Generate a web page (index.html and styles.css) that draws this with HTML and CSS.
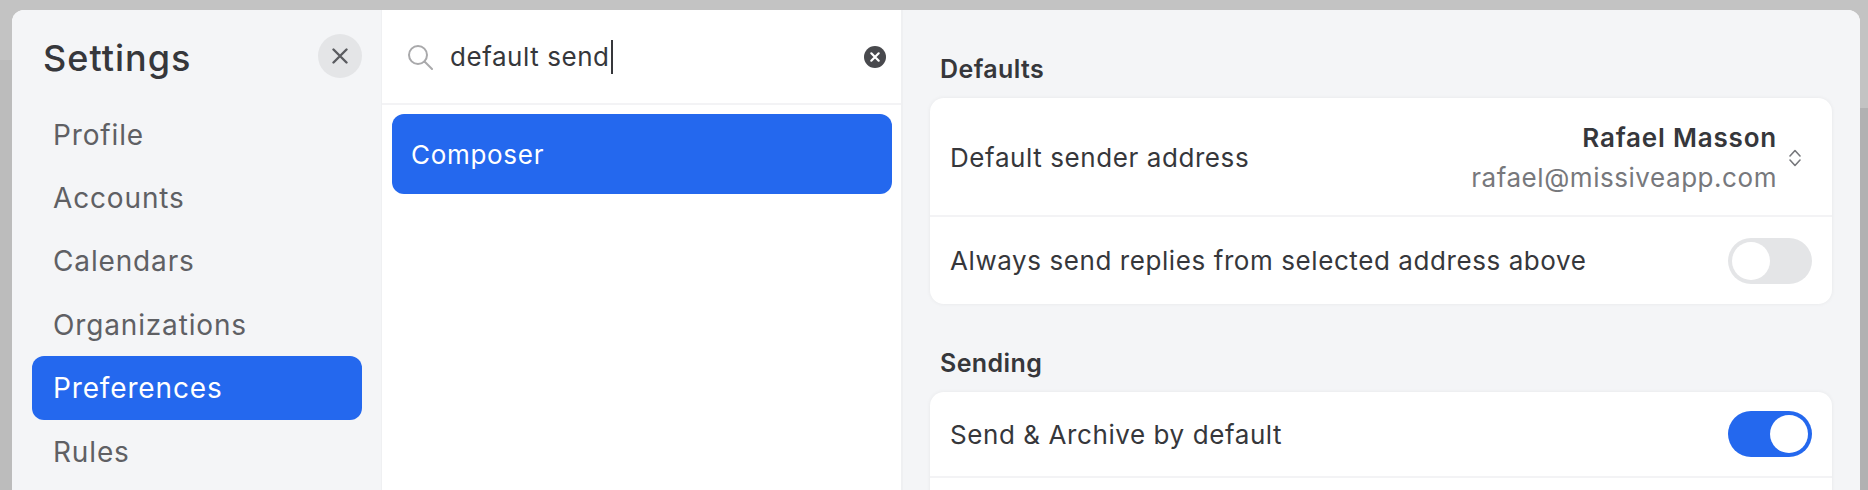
FILE: index.html
```html
<!DOCTYPE html>
<html lang="en">
<head>
<meta charset="utf-8">
<title>Settings</title>
<link rel="stylesheet" href="styles.css">
</head>
<body>
<div class="modal">
  <aside class="sidebar">
    <header class="side-head">
      <h1 class="title">Settings</h1>
      <button class="close" aria-label="Close">
        <svg width="16" height="16" viewBox="0 0 16 16"><path d="M1.5 1.5 14.500 14.500M14.500 1.500 1.500 14.500" fill="none" stroke="#5b5c60" stroke-width="2.4" stroke-linecap="round"/></svg>
      </button>
    </header>
    <nav class="nav">
      <a class="nav-item">Profile</a>
      <a class="nav-item">Accounts</a>
      <a class="nav-item">Calendars</a>
      <a class="nav-item">Organizations</a>
      <a class="nav-item active">Preferences</a>
      <a class="nav-item">Rules</a>
    </nav>
  </aside>
  <section class="middle">
    <div class="search">
      <svg class="search-icon" width="26" height="26" viewBox="0 0 26 26"><circle cx="11" cy="11" r="9" fill="none" stroke="#a9a9ab" stroke-width="2"/><path d="M17.5 17.5 25 25" fill="none" stroke="#a9a9ab" stroke-width="2" stroke-linecap="round"/></svg>
      <span class="query">default send</span><span class="caret"></span>
      <svg class="clear" width="22" height="22" viewBox="0 0 22 22"><circle cx="11" cy="11" r="11" fill="#48494d"/><path d="M7.3 7.3 14.7 14.7M14.7 7.3 7.3 14.7" fill="none" stroke="#fff" stroke-width="2.2" stroke-linecap="round"/></svg>
    </div>
    <div class="results">
      <a class="result">Composer</a>
    </div>
  </section>
  <main class="content">
    <h2 class="section-title">Defaults</h2>
    <div class="card">
      <div class="row row-tall">
        <span>Default sender address</span>
        <div class="picker">
          <div class="identity">
            <strong class="name">Rafael Masson</strong>
            <span class="email">rafael@missiveapp.com</span>
          </div>
          <svg class="updown" width="12" height="18" viewBox="0 0 12 18"><path d="M1 7 6 1.5 11 7M1 11 6 16.5 11 11" fill="none" stroke="#77787c" stroke-width="1.6" stroke-linecap="round" stroke-linejoin="round"/></svg>
        </div>
      </div>
      <div class="row row-plain">
        <span>Always send replies from selected address above</span>
        <span class="toggle"><span class="knob"></span></span>
      </div>
    </div>
    <h2 class="section-title">Sending</h2>
    <div class="card">
      <div class="row row-send">
        <span>Send &amp; Archive by default</span>
        <span class="toggle on"><span class="knob"></span></span>
      </div>
      <div class="row row-empty"></div>
    </div>
  </main>
</div>
</body>
</html>
```
FILE: styles.css
```css
* { box-sizing: border-box; }
html, body { height: 100%; }
body {
  margin: 0;
  overflow: hidden;
  padding: 10px 8px 0 12px;
  font-family: Inter, "Liberation Sans", sans-serif;
  font-optical-sizing: none;
  color: #36373b;
  background-color: #c3c3c3;
  background-image:
    linear-gradient(#bcbcbc, #bcbcbc),
    linear-gradient(#b1b1b2, #b1b1b2);
  background-repeat: no-repeat;
  background-size: 12px 430px, 8px 382px;
  background-position: left bottom, right bottom;
}
.modal {
  display: flex;
  height: 500px;
  background: #fff;
  border-radius: 12px 12px 0 0;
  overflow: hidden;
}
.sidebar {
  flex: 0 0 370px;
  background: #f4f5f7;
  padding: 24px 19px 0 20px;
  border-right: 1px solid #eff0f2;
}
.side-head {
  display: flex;
  align-items: center;
  justify-content: space-between;
  height: 44px;
  margin-bottom: 25px;
}
.title {
  margin: 4px 0 0 11px;
  font-size: 36px;
  font-weight: 500;
  line-height: 44px;
  letter-spacing: 1px;
  color: #36373b;
}
.close {
  display: flex;
  align-items: center;
  justify-content: center;
  width: 44px;
  height: 44px;
  padding: 0;
  border: 0;
  border-radius: 50%;
  background: #e4e5e7;
}
.nav { display: flex; flex-direction: column; }
.nav-item {
  display: flex;
  align-items: center;
  height: 63.4px;
  padding-left: 21px;
  border-radius: 12px;
  font-size: 28px;
  letter-spacing: .85px;
  color: #5f6064;
}
.nav-item.active { height: 64.4px; margin-top: -1px; background: #2468ee; color: #fff; }
.middle {
  flex: 0 0 521px;
  background: #fff;
  border-right: 2px solid #eff0f2;
}
.search {
  display: flex;
  align-items: center;
  height: 95px;
  padding: 0 15px 0 25px;
  border-bottom: 2px solid #f3f3f5;
}
.search-icon { flex: none; margin-right: 17px; }
.query { font-size: 26px; letter-spacing: .55px; color: #36373b; }
.caret { width: 2px; height: 34px; margin-left: 1px; background: #36373b; }
.clear { margin-left: auto; }
.results { padding: 9px 9px 9px 10px; }
.result {
  display: flex;
  align-items: center;
  height: 80px;
  padding-left: 19px;
  border-radius: 12px;
  background: #2468ee;
  color: #fff;
  font-size: 26px;
  letter-spacing: .7px;
}
.content {
  flex: 1;
  background: #f4f5f7;
  padding: 0 28px 0 27px;
}
.section-title {
  display: flex;
  align-items: flex-end;
  height: 88px;
  margin: 0;
  padding: 0 0 14px 10px;
  font-size: 25px;
  font-weight: 600;
  line-height: 30px;
  letter-spacing: .4px;
  color: #36373b;
}
.card {
  background: #fff;
  border-radius: 14px;
  box-shadow: 0 0 4px rgba(0, 0, 0, .06);
}
.row {
  display: flex;
  align-items: center;
  justify-content: space-between;
  padding: 0 20px;
  font-size: 26px;
  letter-spacing: .58px;
  color: #36373b;
}
.row-tall { height: 119px; border-bottom: 2px solid #f3f3f5; padding: 2px 31px 0 20px; }
.row-plain { height: 87px; }
.row-send { height: 86px; border-bottom: 2px solid #f3f3f5; }
.row-empty { height: 60px; }
.picker { display: flex; align-items: center; gap: 12px; }
.identity { display: flex; flex-direction: column; align-items: flex-end; gap: 8px; }
.name { font-size: 26px; font-weight: 600; line-height: 32px; letter-spacing: .8px; color: #36373b; }
.email { font-size: 26px; line-height: 32px; letter-spacing: .55px; color: #77787c; }
.updown { margin-top: 1px; }
.toggle {
  display: block;
  width: 84px;
  height: 46px;
  padding: 4px;
  border-radius: 23px;
  background: #e4e5e7;
}
.knob {
  display: block;
  width: 38px;
  height: 38px;
  border-radius: 50%;
  background: #fff;
}
.toggle.on { background: #2468ee; }
.toggle.on .knob { margin-left: 38px; }
```
